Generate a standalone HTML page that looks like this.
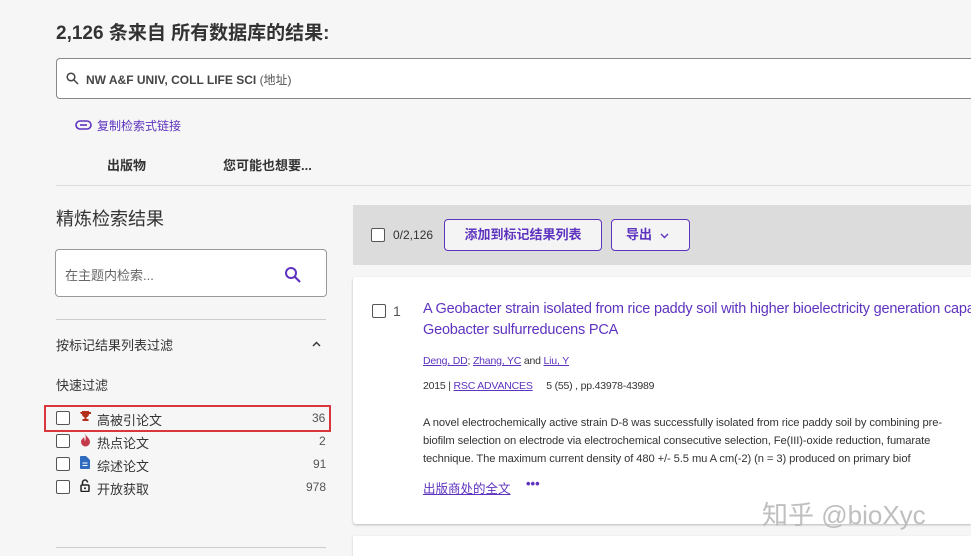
<!DOCTYPE html>
<html><head><meta charset="utf-8"><style>
*{margin:0;padding:0;box-sizing:border-box}
html,body{width:971px;height:556px;overflow:hidden}
body{background:#f6f6f6;font-family:"Liberation Sans","Noto Sans CJK SC",sans-serif;color:#333;position:relative}
.a{position:absolute;white-space:nowrap}
.cb{position:absolute;width:14px;height:14px;border:1.3px solid #555;border-radius:2px;background:#fff}
.p{color:#5e33bf}
.clip{overflow:hidden}
</style></head><body>
<div class="a" style="left:56px;top:18px;font-size:19px;font-weight:bold;color:#333">2,126 条来自 所有数据库的结果:</div>
<div class="a" style="left:56px;top:58px;width:915px;height:41px;background:#fff;border:1px solid #888;border-right:none;border-radius:4px 0 0 4px"></div>
<svg class="a" style="left:66px;top:72px" width="13" height="13" viewBox="0 0 13 13"><circle cx="5" cy="5" r="3.8" fill="none" stroke="#444" stroke-width="1.5"/><path d="M8 8l4 4" stroke="#444" stroke-width="1.5"/></svg>
<div class="a" style="left:86px;top:71px;font-size:12px;font-weight:bold;color:#444">NW A&amp;F UNIV, COLL LIFE SCI <span style="font-weight:normal;color:#555">(地址)</span></div>
<svg class="a" style="left:75px;top:120px" width="17" height="10" viewBox="0 0 17 10"><rect x="1" y="1" width="15" height="8" rx="4" fill="none" stroke="#5e33bf" stroke-width="1.6"/><path d="M5 5h7" stroke="#5e33bf" stroke-width="1.6"/></svg>
<div class="a p" style="left:97px;top:117px;font-size:12px">复制检索式链接</div>
<div class="a" style="left:107px;top:155px;font-size:13px;font-weight:bold">出版物</div>
<div class="a" style="left:223px;top:155px;font-size:13px;font-weight:bold">您可能也想要...</div>
<div class="a" style="left:56px;top:185px;width:915px;height:1px;background:#ddd"></div>

<div class="a" style="left:56px;top:205px;font-size:18px;color:#333">精炼检索结果</div>
<div class="a" style="left:55px;top:249px;width:272px;height:48px;background:#fff;border:1px solid #999;border-radius:4px"></div>
<div class="a" style="left:65px;top:265px;font-size:13px;color:#666">在主题内检索...</div>
<svg class="a" style="left:284px;top:266px" width="18" height="18" viewBox="0 0 18 18"><circle cx="7" cy="7" r="5" fill="none" stroke="#5e33bf" stroke-width="2"/><path d="M11 11l5 5" stroke="#5e33bf" stroke-width="2.2"/></svg>
<div class="a" style="left:56px;top:319px;width:270px;height:1px;background:#ccc"></div>
<div class="a" style="left:56px;top:335px;font-size:13px">按标记结果列表过滤</div>
<svg class="a" style="left:312px;top:341px" width="9" height="6" viewBox="0 0 9 6"><path d="M1 5l3.5-3.5L8 5" fill="none" stroke="#333" stroke-width="1.4"/></svg>
<div class="a" style="left:56px;top:375px;font-size:13px">快速过滤</div>
<div class="a" style="left:44px;top:405px;width:287px;height:27px;border:2.5px solid #d9363e"></div>
<div class="cb" style="left:56px;top:411px"></div>
<svg class="a" style="left:80px;top:411px" width="11" height="11" viewBox="0 0 11 11"><path d="M2 0h7v3a3.5 3.5 0 0 1-7 0z M0 1h2v2H1z M9 1h2v2H9z M4.5 6h2v2h-2z M2.5 8h6v2h-6z" fill="#b5301b"/></svg>
<div class="a" style="left:97px;top:410px;font-size:13px">高被引论文</div>
<div class="a" style="left:312px;top:411px;font-size:12px;color:#555">36</div>
<div class="cb" style="left:56px;top:434px"></div>
<svg class="a" style="left:80px;top:433px" width="11" height="14" viewBox="0 0 11 14"><path d="M5 0C6 4 10 5 10 9a4.5 4.5 0 0 1-9 0C1 6 3 6 4 4c1 2 0 3 1 4 1-2 1-4 0-8z" fill="#c43a4a"/></svg>
<div class="a" style="left:97px;top:433px;font-size:13px">热点论文</div>
<div class="a" style="left:319px;top:434px;font-size:12px;color:#555">2</div>
<div class="cb" style="left:56px;top:457px"></div>
<svg class="a" style="left:80px;top:456px" width="10" height="13" viewBox="0 0 10 13"><path d="M0 1a1 1 0 0 1 1-1h5l4 4v8a1 1 0 0 1-1 1H1a1 1 0 0 1-1-1z" fill="#2f6bbf"/><path d="M2.5 7h5M2.5 9.5h5" stroke="#fff" stroke-width="1"/></svg>
<div class="a" style="left:97px;top:456px;font-size:13px">综述论文</div>
<div class="a" style="left:313px;top:457px;font-size:12px;color:#555">91</div>
<div class="cb" style="left:56px;top:480px"></div>
<svg class="a" style="left:80px;top:479px" width="10" height="13" viewBox="0 0 10 13"><path d="M2.5 6V3.5a2.5 2.5 0 0 1 5 0" fill="none" stroke="#222" stroke-width="1.5"/><rect x="1" y="6" width="8" height="6.5" rx="1" fill="none" stroke="#222" stroke-width="1.5"/><circle cx="5" cy="9.2" r="1" fill="#222"/></svg>
<div class="a" style="left:97px;top:479px;font-size:13px">开放获取</div>
<div class="a" style="left:306px;top:480px;font-size:12px;color:#555">978</div>
<div class="a" style="left:56px;top:547px;width:270px;height:1px;background:#ccc"></div>

<div class="a" style="left:353px;top:205px;width:618px;height:60px;background:#dcdcdc"></div>
<div class="cb" style="left:371px;top:228px"></div>
<div class="a" style="left:393px;top:228px;font-size:12px">0/2,126</div>
<div class="a p" style="left:444px;top:219px;width:158px;height:32px;border:1.3px solid #5e33bf;border-radius:4px;background:#f4f4f4;font-size:13px;font-weight:bold;line-height:30px;text-align:center">添加到标记结果列表</div>
<div class="a p" style="left:611px;top:219px;width:79px;height:32px;border:1.3px solid #5e33bf;border-radius:4px;background:#f4f4f4;font-size:13px;font-weight:bold;line-height:30px;padding-left:14px">导出 <svg width="9" height="6" viewBox="0 0 9 6" style="margin-left:4px"><path d="M1 1l3.5 3.5L8 1" fill="none" stroke="#5e33bf" stroke-width="1.4"/></svg></div>

<div class="a clip" style="left:353px;top:277px;width:618px;height:247px;background:#fff;box-shadow:0 1px 2px rgba(0,0,0,.25);border-radius:3px 0 0 3px">
<div class="cb" style="left:19px;top:27px"></div>
<div class="a" style="left:40px;top:26px;font-size:14px;color:#555">1</div>
<div class="a p" style="left:70px;top:22px;font-size:14.5px;line-height:21px;letter-spacing:-0.2px">A Geobacter strain isolated from rice paddy soil with higher bioelectricity generation capability<br>Geobacter sulfurreducens PCA</div>
<div class="a" style="left:70px;top:78px;font-size:10.5px;color:#333;letter-spacing:-0.2px"><span class="p" style="text-decoration:underline">Deng, DD</span>; <span class="p" style="text-decoration:underline">Zhang, YC</span> and <span class="p" style="text-decoration:underline">Liu, Y</span></div>
<div class="a" style="left:70px;top:103px;font-size:10.5px;color:#333;letter-spacing:-0.2px">2015 | <span class="p" style="text-decoration:underline">RSC ADVANCES</span> &nbsp;&nbsp;&nbsp; 5 (55) , pp.43978-43989</div>
<div class="a" style="left:70px;top:137px;font-size:11.2px;line-height:18px;color:#333;letter-spacing:-0.1px">A novel electrochemically active strain D-8 was successfully isolated from rice paddy soil by combining pre-<br>biofilm selection on electrode via electrochemical consecutive selection, Fe(III)-oxide reduction, fumarate<br>technique. The maximum current density of 480 +/- 5.5 mu A cm(-2) (n = 3) produced on primary biof</div>
<div class="a p" style="left:70px;top:201px;font-size:12.5px;text-decoration:underline">出版商处的全文</div>
<div class="a p" style="left:173px;top:199px;font-size:13px;font-weight:bold">•••</div>
</div>
<div class="a" style="left:762px;top:495px;font-size:26px;color:rgba(180,180,180,.85)">知乎 @bioXyc</div>
<div class="a" style="left:353px;top:536px;width:618px;height:20px;background:#fff;box-shadow:0 1px 2px rgba(0,0,0,.2)"></div>
</body></html>
